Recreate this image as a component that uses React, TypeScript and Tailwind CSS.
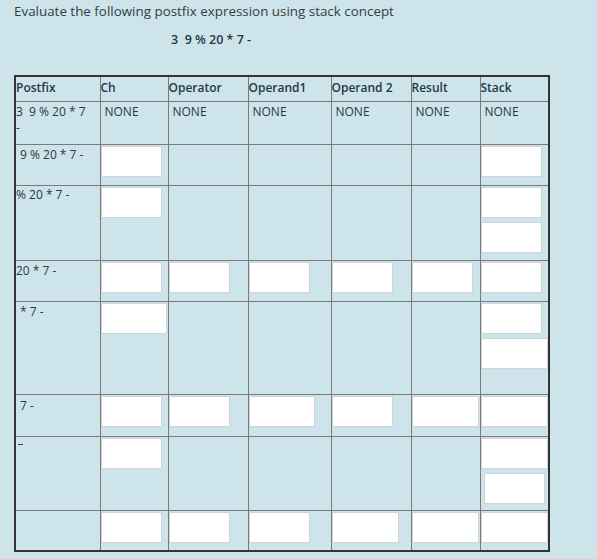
import React from 'react';

const font = { fontFamily: '"Open Sans", "Liberation Sans", sans-serif' };

// one input box, sized like the textareas in the original form
function Box({ w = 'w-[61px]', mt = 'mt-px' }: { w?: string; mt?: string }) {
  return <div className={`${w} ${mt} h-[31px] bg-white border border-[#d0d4d8]`} />;
}

const cell = 'border border-[#7a7a7a] align-top p-0';

export default function App() {
  return (
    <div className="min-h-screen w-full bg-[#cde5ea] text-[#253846]" style={font}>
      <div className="pl-[14px] pt-[3px] text-[13.4px] leading-[17px] text-[#333d44]">
        Evaluate the following postfix expression using stack concept
      </div>
      <div className="pl-[171px] pt-[12px] text-[12.5px] leading-[16px] font-semibold text-[#253846]">
        3&nbsp;&nbsp;9 % 20 * 7 -
      </div>

      <table className="ml-[14px] mt-[27px] table-fixed w-[534px] border-collapse border-2 border-[#333] text-[12px] leading-[16px]">
        <colgroup>
          <col className="w-[85px]" />
          <col className="w-[68px]" />
          <col className="w-[80px]" />
          <col className="w-[83px]" />
          <col className="w-[80px]" />
          <col className="w-[69px]" />
          <col className="w-[69px]" />
        </colgroup>
        <tbody>
          <tr className="h-[25px] font-semibold">
            <td className={`${cell} pt-[3px]`}>Postfix</td>
            <td className={`${cell} pt-[3px]`}>Ch</td>
            <td className={`${cell} pt-[3px]`}>Operator</td>
            <td className={`${cell} pt-[3px]`}>Operand1</td>
            <td className={`${cell} pt-[3px]`}>Operand 2</td>
            <td className={`${cell} pt-[3px]`}>Result</td>
            <td className={`${cell} pt-[3px]`}>Stack</td>
          </tr>
          <tr className="h-[43px]">
            <td className={`${cell} pt-[2px] pr-2`}>3&nbsp;&nbsp;9 % 20 * 7 -</td>
            <td className={`${cell} pt-[2px] pl-[4px]`}>NONE</td>
            <td className={`${cell} pt-[2px] pl-[4px]`}>NONE</td>
            <td className={`${cell} pt-[2px] pl-[4px]`}>NONE</td>
            <td className={`${cell} pt-[2px] pl-[4px]`}>NONE</td>
            <td className={`${cell} pt-[2px] pl-[4px]`}>NONE</td>
            <td className={`${cell} pt-[2px] pl-[4px]`}>NONE</td>
          </tr>
          <tr className="h-[41px]">
            <td className={`${cell} pt-[2px] pl-[4px]`}>9 % 20 * 7 -</td>
            <td className={cell}><Box /></td>
            <td className={cell} />
            <td className={cell} />
            <td className={cell} />
            <td className={cell} />
            <td className={cell}><Box /></td>
          </tr>
          <tr className="h-[75px]">
            <td className={`${cell} pt-[1px]`}>% 20 * 7 -</td>
            <td className={cell}><Box /></td>
            <td className={cell} />
            <td className={cell} />
            <td className={cell} />
            <td className={cell} />
            <td className={cell}>
              <Box />
              <Box mt="mt-[4px]" />
            </td>
          </tr>
          <tr className="h-[41px]">
            <td className={`${cell} pt-[2px]`}>20 * 7 -</td>
            <td className={cell}><Box /></td>
            <td className={cell}><Box /></td>
            <td className={cell}><Box /></td>
            <td className={cell}><Box /></td>
            <td className={cell}><Box /></td>
            <td className={cell}><Box /></td>
          </tr>
          <tr className="h-[93px]">
            <td className={`${cell} pt-[2px] pl-[4px]`}>* 7 -</td>
            <td className={cell}><Box w="w-[66px]" /></td>
            <td className={cell} />
            <td className={cell} />
            <td className={cell} />
            <td className={cell} />
            <td className={cell}>
              <Box />
              <Box w="w-[67px]" mt="mt-[4px]" />
            </td>
          </tr>
          <tr className="h-[42px]">
            <td className={`${cell} pt-[3px] pl-[4px]`}>7 -</td>
            <td className={cell}><Box /></td>
            <td className={cell}><Box /></td>
            <td className={cell}><Box w="w-[66px]" /></td>
            <td className={cell}><Box /></td>
            <td className={cell}><Box w="w-[67px]" /></td>
            <td className={cell}><Box w="w-[67px]" /></td>
          </tr>
          <tr className="h-[74px]">
            <td className={`${cell} pl-[2px]`}>
              <div className="mt-[7px] w-[5px] h-[1.5px] bg-[#1d4f6a]" />
            </td>
            <td className={cell}><Box /></td>
            <td className={cell} />
            <td className={cell} />
            <td className={cell} />
            <td className={cell} />
            <td className={cell}>
              <Box w="w-[67px]" />
              <div className="ml-[3px] mt-[4px] w-[61px] h-[31px] bg-white border border-[#d0d4d8]" />
            </td>
          </tr>
          <tr className="h-[41px]">
            <td className={cell} />
            <td className={cell}><Box /></td>
            <td className={cell}><Box /></td>
            <td className={cell}><Box /></td>
            <td className={cell}><Box w="w-[67px]" /></td>
            <td className={cell}><Box w="w-[67px]" /></td>
            <td className={cell}><Box w="w-[67px]" /></td>
          </tr>
        </tbody>
      </table>
    </div>
  );
}
